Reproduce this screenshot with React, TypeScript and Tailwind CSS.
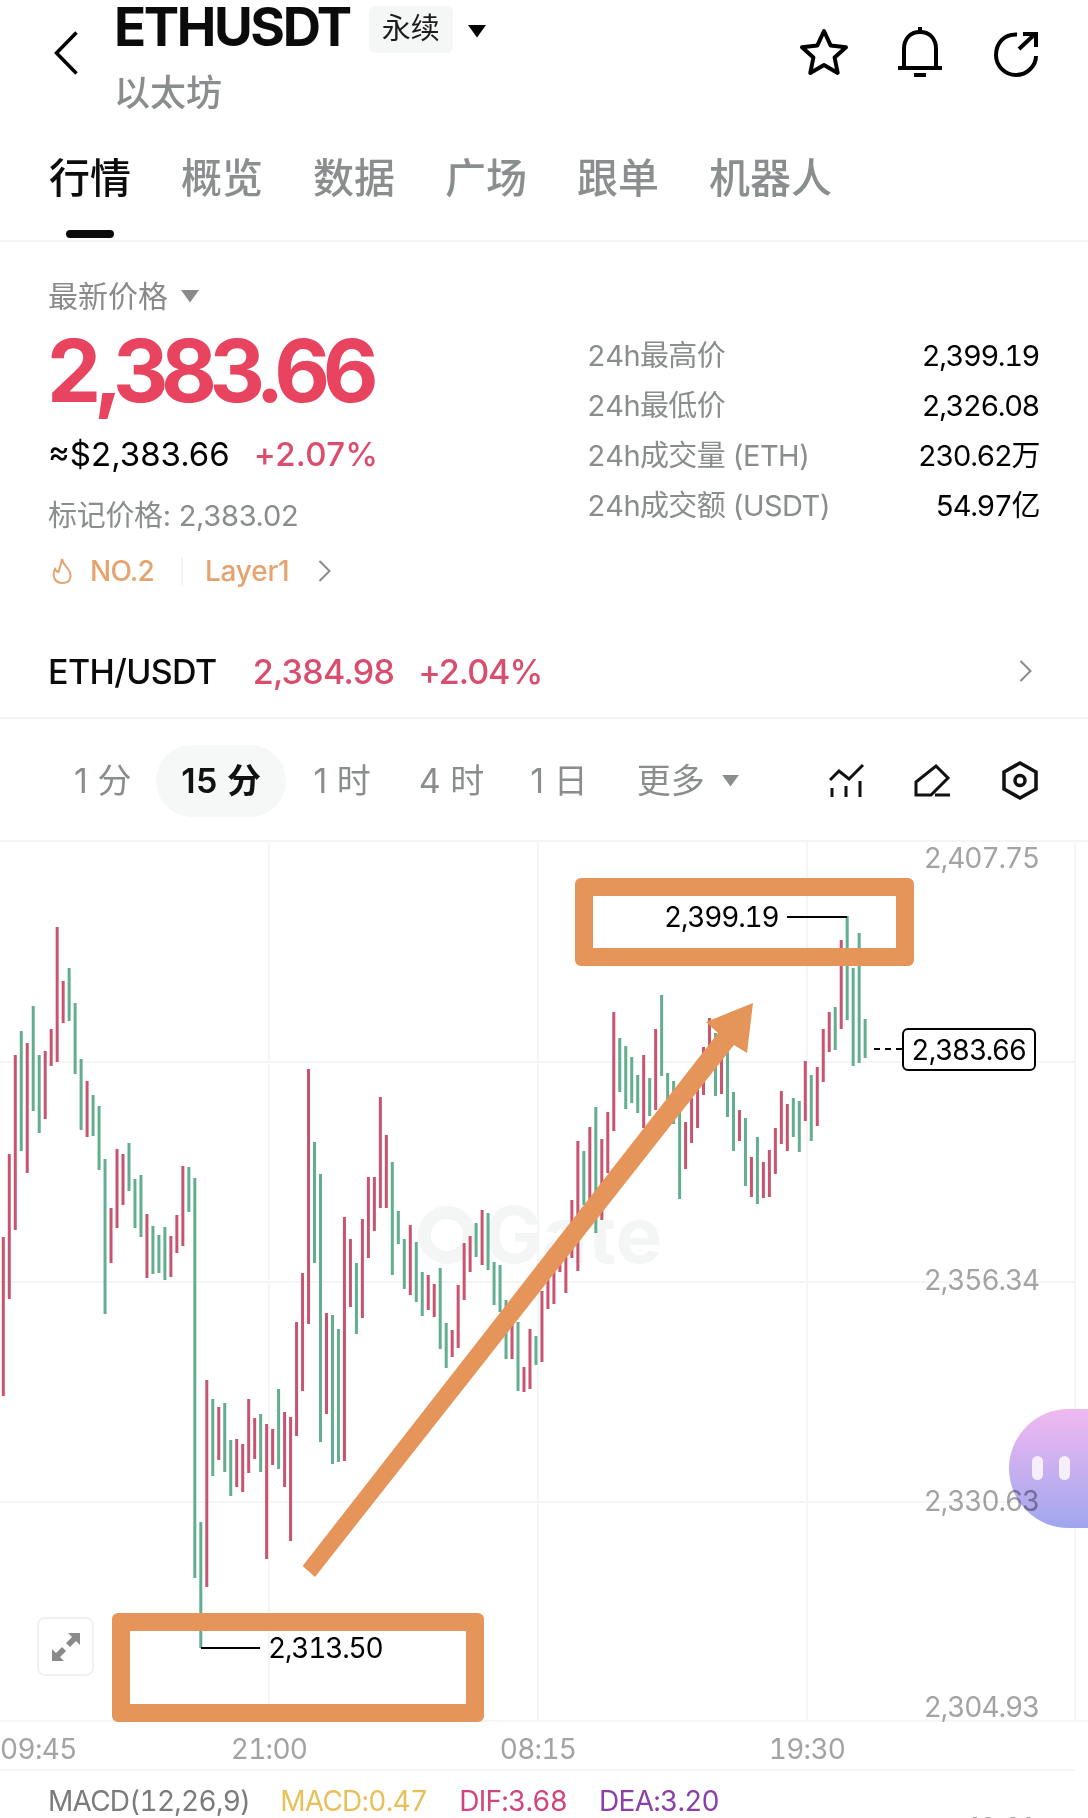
type Candle = [number, number, 'g' | 'r'];

const candles: Candle[] = [
  [1237, 1396, 'r'], [1154, 1299, 'r'], [1055, 1230, 'r'], [1031, 1151, 'g'], [1043, 1173, 'r'], [1006, 1111, 'g'],
  [1055, 1133, 'g'], [1051, 1119, 'r'], [1029, 1066, 'r'], [927, 1062, 'r'], [981, 1023, 'r'], [968, 1021, 'g'],
  [1003, 1074, 'g'], [1059, 1130, 'g'], [1081, 1137, 'r'], [1095, 1136, 'g'], [1106, 1170, 'g'], [1159, 1314, 'g'],
  [1208, 1263, 'r'], [1149, 1228, 'r'], [1154, 1205, 'r'], [1143, 1191, 'g'], [1179, 1228, 'g'], [1175, 1237, 'g'],
  [1214, 1278, 'r'], [1226, 1274, 'g'], [1235, 1273, 'g'], [1227, 1280, 'g'], [1236, 1277, 'r'], [1215, 1253, 'r'],
  [1166, 1246, 'r'], [1167, 1212, 'g'], [1178, 1578, 'g'], [1522, 1648, 'g'], [1380, 1587, 'r'], [1399, 1476, 'g'],
  [1407, 1460, 'r'], [1403, 1472, 'g'], [1440, 1496, 'g'], [1439, 1487, 'r'], [1444, 1492, 'r'], [1399, 1473, 'r'],
  [1418, 1459, 'r'], [1414, 1472, 'g'], [1424, 1559, 'r'], [1429, 1465, 'r'], [1389, 1469, 'g'], [1412, 1487, 'r'],
  [1417, 1541, 'r'], [1322, 1436, 'r'], [1273, 1391, 'r'], [1069, 1324, 'r'], [1142, 1263, 'g'], [1174, 1442, 'g'],
  [1313, 1414, 'r'], [1315, 1464, 'g'], [1329, 1462, 'g'], [1217, 1461, 'r'], [1239, 1307, 'r'], [1263, 1334, 'g'],
  [1219, 1318, 'r'], [1177, 1258, 'r'], [1177, 1231, 'r'], [1097, 1208, 'r'], [1135, 1208, 'r'], [1162, 1275, 'g'],
  [1211, 1244, 'g'], [1239, 1289, 'g'], [1225, 1295, 'r'], [1242, 1302, 'g'], [1272, 1316, 'g'], [1275, 1310, 'r'],
  [1284, 1317, 'r'], [1268, 1349, 'g'], [1323, 1368, 'g'], [1330, 1357, 'r'], [1285, 1348, 'r'], [1243, 1300, 'r'],
  [1236, 1272, 'r'], [1223, 1257, 'g'], [1210, 1265, 'r'], [1213, 1270, 'g'], [1262, 1305, 'g'], [1265, 1312, 'g'],
  [1300, 1359, 'g'], [1320, 1359, 'r'], [1322, 1391, 'g'], [1367, 1392, 'r'], [1329, 1389, 'r'], [1336, 1365, 'g'],
  [1291, 1362, 'r'], [1278, 1309, 'r'], [1272, 1304, 'r'], [1250, 1272, 'r'], [1257, 1293, 'r'], [1200, 1258, 'r'],
  [1141, 1271, 'r'], [1151, 1205, 'g'], [1127, 1200, 'r'], [1107, 1233, 'g'], [1139, 1220, 'r'], [1112, 1173, 'r'],
  [1012, 1131, 'r'], [1038, 1092, 'g'], [1046, 1109, 'g'], [1057, 1103, 'g'], [1075, 1113, 'g'], [1055, 1128, 'r'],
  [1078, 1116, 'g'], [1029, 1110, 'r'], [995, 1076, 'g'], [1073, 1100, 'g'], [1081, 1124, 'g'], [1110, 1199, 'g'],
  [1122, 1169, 'r'], [1098, 1143, 'r'], [1087, 1128, 'r'], [1047, 1095, 'r'], [1018, 1050, 'r'], [1033, 1096, 'g'],
  [1057, 1094, 'r'], [1052, 1117, 'g'], [1092, 1151, 'g'], [1110, 1141, 'r'], [1118, 1186, 'g'], [1157, 1197, 'r'],
  [1137, 1204, 'g'], [1162, 1198, 'r'], [1150, 1197, 'r'], [1128, 1174, 'r'], [1091, 1144, 'r'], [1104, 1151, 'r'],
  [1098, 1137, 'g'], [1101, 1152, 'g'], [1061, 1121, 'r'], [1075, 1141, 'g'], [1067, 1126, 'r'], [1029, 1082, 'r'],
  [1012, 1052, 'r'], [1007, 1050, 'g'], [940, 1029, 'r'], [916, 1020, 'g'], [968, 1066, 'g'], [933, 1063, 'g'],
  [1019, 1058, 'g'],
];

const tabs = ['概览', '数据', '广场', '跟单', '机器人'];

const stats = [
  ['24h最高价', '2,399.19'],
  ['24h最低价', '2,326.08'],
  ['24h成交量 (ETH)', '230.62万'],
  ['24h成交额 (USDT)', '54.97亿'],
];

function Caret({ className }: { className: string }) {
  return (
    <svg className={className} viewBox="0 0 20 14" fill="currentColor">
      <path d="M1 1h18L10 13.5z" />
    </svg>
  );
}

function Chevron({ className }: { className: string }) {
  return (
    <svg className={className} viewBox="0 0 13 22" fill="none" stroke="currentColor" strokeWidth="2">
      <path d="M1.5 1l10 10-10 10" />
    </svg>
  );
}

function ChartCandles() {
  return (
    <svg className="absolute inset-0 w-[1088px] h-[880px]" viewBox="0 842 1088 880">
      <g stroke="#f5f5f5" strokeWidth="2">
        <path d="M0 1062H1075M0 1282H1075M0 1502H1075" />
        <path d="M269 842V1722M538 842V1722M807 842V1722M1075 842V1722" />
      </g>
      {candles.map(([top, bottom, color], i) => (
        <rect
          key={i}
          x={3.3 + 5.985 * i - 1.5}
          y={top}
          width="3"
          height={bottom - top}
          fill={color === 'g' ? '#62ae8e' : '#c8546f'}
        />
      ))}
      <polygon
        points="302.6,1566 315,1577 734,1045 747,1053 753,1003 706,1022 718,1033"
        fill="#e5955a"
      />
    </svg>
  );
}

function Chart() {
  return (
    <div className="relative h-[880px] border-b-2 border-[#f5f5f5]">
      <div className="absolute left-[418px] top-[354px] flex items-center gap-2 text-[#f4f5f5]">
        <div className="w-[58px] h-[58px] rounded-full border-[13px] border-[#f4f5f5]" />
        <span className="text-[78px] leading-none font-bold">Gate</span>
      </div>
      <ChartCandles />

      <div className="absolute left-[575px] top-[36px] w-[339px] h-[88px] rounded-md border-[18px] border-[#e5955a]" />
      <div className="absolute left-[112px] top-[771px] w-[372px] h-[109px] rounded-md border-[18px] border-[#e5955a]" />

      <div className="absolute left-[664px] top-[56px] flex items-center text-[28px] leading-[38px] tabular-nums tracking-[-1.2px] text-black">
        2,399.19
        <div className="ml-[9px] w-[60px] h-[2px] bg-black" />
      </div>

      <div className="absolute left-[874px] top-[206px] w-[28px] border-t-2 border-dashed border-black" />
      <div className="absolute left-[902px] top-[186px] w-[134px] h-[43px] flex items-center justify-center rounded-md border-2 border-black bg-white text-[28px] tracking-[-0.4px] text-black">
        2,383.66
      </div>

      <div className="absolute left-[201px] top-[787px] flex items-center text-[28px] leading-[38px] tabular-nums tracking-[-1.2px] text-black">
        <div className="mr-[8px] w-[59px] h-[2px] bg-black" />
        2,313.50
      </div>

      <div className="absolute left-[37px] top-[775px] w-[57px] h-[59px] flex items-center justify-center rounded-lg border-2 border-[#f1f1f1] bg-white">
        <svg className="w-[28px] h-[28px]" viewBox="0 0 28 28" fill="#8a8a8a">
          <path d="M16 0h12v12l-4-4-6 6-4-4 6-6zM12 28H0V16l4 4 6-6 4 4-6 6z" />
        </svg>
      </div>

      <div className="absolute left-[1009px] top-[567px] w-[79px] h-[119px] rounded-l-[60px] bg-linear-to-b from-[#f0b8f0] to-[#a0a6ee]">
        <div className="flex gap-[16px] pl-[23px] pt-[47px]">
          <div className="w-[11px] h-[24px] rounded-full bg-[#f7eefb]" />
          <div className="w-[11px] h-[24px] rounded-full bg-[#f7eefb]" />
        </div>
      </div>

      <div className="absolute right-[49px] top-[-2px] text-[28px] leading-[36px] tabular-nums tracking-[-1.1px] text-[#a3a3a3]">2,407.75</div>
      <div className="absolute right-[49px] top-[420px] text-[28px] leading-[36px] tabular-nums tracking-[-1.1px] text-[#a3a3a3]">2,356.34</div>
      <div className="absolute right-[49px] top-[641px] text-[28px] leading-[36px] tabular-nums tracking-[-1.1px] text-[#a3a3a3] mix-blend-multiply">2,330.63</div>
      <div className="absolute right-[49px] top-[847px] text-[28px] leading-[36px] tabular-nums tracking-[-1.1px] text-[#a3a3a3]">2,304.93</div>
    </div>
  );
}

export default function App() {
  return (
    <div className="relative w-[1088px] h-[1818px] overflow-hidden bg-white font-['Inter','Noto_Sans_CJK_SC',sans-serif]">
      {/* header */}
      <div className="h-[242px] border-b-2 border-[#f3f4f4]">
        <div className="flex h-[120px]">
          <svg className="ml-[54px] mt-[31px] w-[24px] h-[44px] text-black" viewBox="0 0 24 44" fill="none" stroke="currentColor" strokeWidth="3.5">
            <path d="M22.5 1.5L2.5 22l20 20.5" />
          </svg>
          <div className="ml-[36px]">
            <div className="flex items-center h-[58px]">
              <span className="-mt-[4px] text-[53px] leading-[60px] font-bold tracking-[-2.4px] text-[#0b0b0b]">ETHUSDT</span>
              <span className="ml-[19px] w-[84px] h-[47px] flex items-center justify-center rounded-md bg-[#f5f6f6] text-[29px] text-[#1c1c1c]">永续</span>
              <Caret className="ml-[14px] mt-[4px] w-[20px] h-[14px] text-black" />
            </div>
            <div className="mt-[15px] text-[36px] leading-[40px] font-medium text-[#8a8d8d]">以太坊</div>
          </div>
          <div className="ml-auto flex items-start text-black">
            <svg className="mt-[28px] w-[50px] h-[48px]" viewBox="0 0 50 48" fill="none" stroke="currentColor" strokeWidth="4" strokeLinejoin="round">
              <path d="M25 3l6.6 14.4 15.4 1.8-11.4 10.4 3.1 15.3L25 37l-13.700 7.900 3.100-15.300L3 19.200l15.400-1.800z" />
            </svg>
            <svg className="ml-[49px] mt-[27px] w-[44px] h-[50px]" viewBox="0 0 44 50" fill="none" stroke="currentColor" strokeWidth="4">
              <path d="M0 41H44M6 41V22C6 12 12 5 22 5s16 7 16 17V41" />
              <path d="M22 0V5" />
              <path d="M16 48H28" strokeWidth="4" />
            </svg>
            <svg className="ml-[52px] mr-[50px] mt-[31px] w-[44px] h-[46px]" viewBox="0 0 44 46" fill="none" stroke="currentColor" strokeWidth="4">
              <path d="M23 3.500C10 3 2 12 2 24c0 11 9 20 20 20s20-9 20-19" />
              <path d="M25 18L41 3M29 3H42V16" />
            </svg>
          </div>
        </div>

        <div className="flex gap-[50px] pl-[49px] pt-[34px]">
          <div className="flex flex-col items-center">
            <span className="text-[41px] leading-[48px] font-medium text-[#0c0c0c]">行情</span>
            <div className="mt-[28px] w-[48px] h-[8px] rounded-full bg-[#0b0b0b]" />
          </div>
          {tabs.map((t) => (
            <span key={t} className="text-[41px] leading-[48px] font-medium text-[#8a8e8e]">{t}</span>
          ))}
        </div>
      </div>

      {/* price summary */}
      <div className="flex h-[393px]">
        <div className="pl-[48px] pt-[38px] w-[587px]">
          <div className="flex items-center h-[32px] text-[30px] text-[#8a8a8a]">
            最新价格
            <Caret className="ml-[12px] w-[20px] h-[14px]" />
          </div>
          <div className="mt-[15px] -ml-[1px] text-[86px] leading-[88px] font-bold tracking-[-7.5px] text-[#e8435f]">2,383.66</div>
          <div className="mt-[20px] flex items-center h-[40px] text-[33px]">
            <span className="text-black">≈$2,383.66</span>
            <span className="ml-[24px] font-medium tracking-[0.3px] text-[#dc4d6d]">+2.07%</span>
          </div>
          <div className="mt-[23px] h-[36px] leading-[36px] text-[29px] tracking-[-0.3px] text-[#8a8d8d]">标记价格: 2,383.02</div>
          <div className="mt-[19px] flex items-center h-[36px] text-[28px] font-medium text-[#e5a46f]">
            <svg className="ml-[4px] w-[21px] h-[26px]" viewBox="0 0 21 26" fill="none" stroke="currentColor" strokeWidth="2">
              <path d="M10 1c1 5 3 6 6 10 4 5 4 14-5.500 14C2 25 0 17 3 11c1 2 2 3 3.500 3C8 10 9 5 10 1z" />
            </svg>
            <span className="ml-[17px] tracking-[-0.8px]">NO.2</span>
            <div className="ml-[27px] w-[2px] h-[27px] bg-[#f2f2f2]" />
            <span className="ml-[22px] tracking-[-0.2px]">Layer1</span>
            <Chevron className="ml-[28px] w-[13px] h-[22px] text-[#8a8a8a]" />
          </div>
        </div>
        <div className="pt-[89px] w-[452px]">
          {stats.map(([label, value]) => (
            <div key={label} className="flex items-center justify-between h-[50px] text-[29px] tabular-nums tracking-[-0.6px]">
              <span className="text-[#8a8d8d]">{label}</span>
              <span className="text-black tracking-[-1.4px]">{value}</span>
            </div>
          ))}
        </div>
      </div>

      <div className="flex items-center h-[84px] pb-[10px] pl-[48px] pr-[56px] border-b-2 border-[#f3f4f4] text-[34px]">
        <span className="text-[#0b0b0b] font-medium tracking-[-0.6px]">ETH/USDT</span>
        <span className="ml-[36px] font-medium tracking-[-0.7px] text-[#d94d6e]">2,384.98</span>
        <span className="ml-[24px] font-medium tracking-[-1px] text-[#d94d6e]">+2.04%</span>
        <Chevron className="ml-auto w-[13px] h-[22px] text-[#8a8a8a]" />
      </div>

      {/* chart toolbar */}
      <div className="flex items-center h-[123px] pt-[2px] border-b-2 border-[#f3f4f4] pl-[74px] text-[34px] text-[#8a8d8d]">
        <span>1 分</span>
        <span className="ml-[25px] w-[130px] h-[72px] flex items-center justify-center rounded-full bg-[#f6f7f7] font-semibold tracking-[0.5px] text-[#111]">15 分</span>
        <span className="ml-[27px]">1 时</span>
        <span className="ml-[48px]">4 时</span>
        <span className="ml-[46px]">1 日</span>
        <span className="ml-[49px]">更多</span>
        <Caret className="ml-[16px] w-[19px] h-[13px]" />
        <svg className="ml-[89px] w-[35px] h-[33px] text-[#111]" viewBox="0 0 35 33" fill="none" stroke="currentColor" strokeWidth="3">
          <path d="M1 16l9-9 10 8L34 1M3 24v9M17 22v11M31 17v16" />
        </svg>
        <svg className="ml-[50px] w-[37px] h-[33px] text-[#111]" viewBox="0 0 37 33" fill="none" stroke="currentColor" strokeWidth="3">
          <path d="M22 2l12 12-17 17H2V18zM21 31h15" />
        </svg>
        <svg className="ml-[51px] w-[36px] h-[39px] text-[#111]" viewBox="0 0 36 39" fill="none" stroke="currentColor" strokeWidth="3.500">
          <path d="M18 2l16 9v17l-16 9-16-9V11z" />
          <circle cx="18" cy="19.500" r="5" />
        </svg>
      </div>

      <Chart />

      {/* time axis */}
      <div className="relative h-[49px] border-b-2 border-[#f5f5f5] w-[1075px] text-[28px] leading-[54px] tabular-nums tracking-[-0.7px] text-[#a3a3a3]">
        <span className="absolute left-[0px]">09:45</span>
        <span className="absolute left-[269px] -translate-x-1/2">21:00</span>
        <span className="absolute left-[538px] -translate-x-1/2">08:15</span>
        <span className="absolute left-[807px] -translate-x-1/2">19:30</span>
      </div>

      {/* macd legend */}
      <div className="flex items-center h-[60px] pl-[48px] text-[28px] tabular-nums tracking-[-0.75px]">
        <span className="text-[#7b7b7b]">MACD(12,26,9)</span>
        <span className="ml-[30px] text-[#e8c05a]">MACD:0.47</span>
        <span className="ml-[32px] text-[#d0457f]">DIF:3.68</span>
        <span className="ml-[32px] text-[#8b3fa8]">DEA:3.20</span>
      </div>
      <div className="absolute left-[968px] top-[1812px] text-[28px] leading-[32px] text-[#a3a3a3]">12.21</div>
    </div>
  );
}
